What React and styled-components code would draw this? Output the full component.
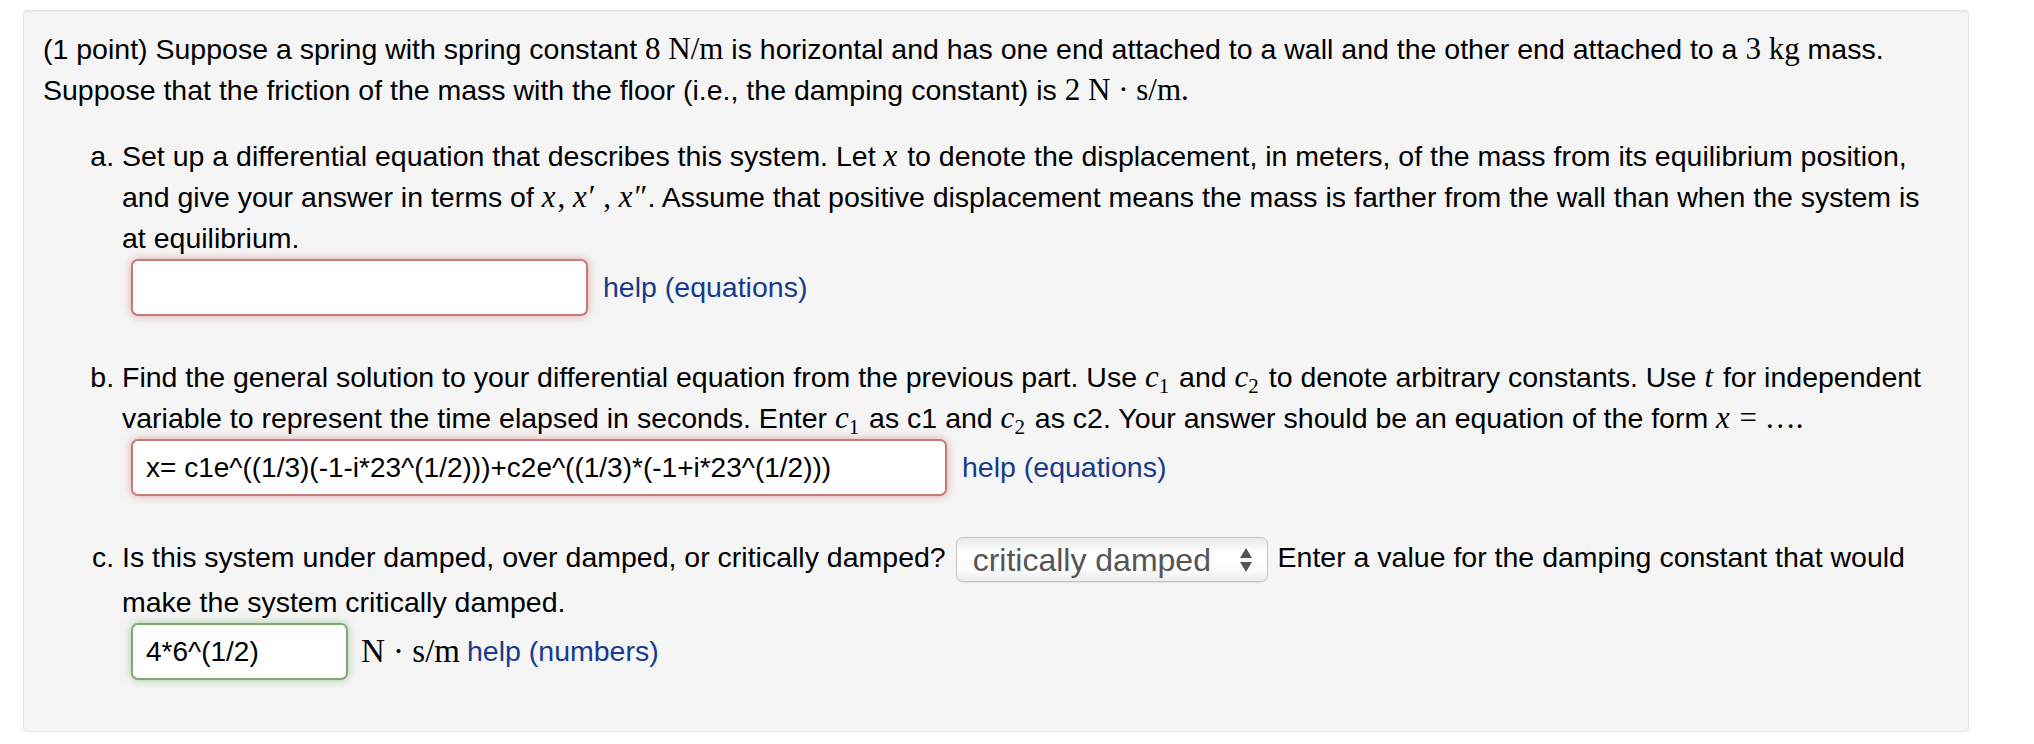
import React from 'react';
import styled, { createGlobalStyle } from 'styled-components';

const GlobalStyle = createGlobalStyle`
  body {
    margin: 0;
    background: #ffffff;
    font-family: "Liberation Sans", Arial, Helvetica, sans-serif;
  }
`;

const Page = styled.div`
  padding: 10px 0 14px 23px;
`;

const Well = styled.div`
  box-sizing: border-box;
  width: 1946px;
  padding: 18px 19px 51px;
  background: #f5f5f5;
  border: 1px solid #e3e3e3;
  border-radius: 4px;
  box-shadow: inset 0 1px 1px rgba(0, 0, 0, 0.05);
  font-size: 28.5px;
  line-height: 41px;
  color: #000;
`;

const Intro = styled.p`
  margin: 0 0 25px;
`;

const Parts = styled.ol`
  list-style: lower-alpha;
  margin: 0;
  padding-left: 79px;
`;

const Part = styled.li`
  margin-bottom: ${({ last }) => (last ? '0' : '41px')};
  padding-left: 0;
`;

// MathJax-like inline math
const M = styled.span`
  font-family: "Liberation Serif", "Times New Roman", serif;
  font-size: 31px;
  line-height: 1;
`;

const V = styled.i`
  font-family: "Liberation Serif", "Times New Roman", serif;
  font-size: 31px;
  line-height: 1;
  font-style: italic;
  padding-right: 2px;
`;

const Sub = styled.sub`
  font-style: normal;
  font-size: 21px;
  line-height: 1;
  vertical-align: -6px;
`;

const AnswerRow = styled.div`
  display: flex;
  align-items: center;
  gap: ${({ gap }) => gap || 15}px;
  margin: 0 0 0 9px;
`;

const AnswerBox = styled.div`
  box-sizing: border-box;
  width: ${({ w }) => w}px;
  height: 57px;
  padding: 0 13px;
  display: flex;
  align-items: center;
  background: #fff;
  border: 2px solid ${({ ok }) => (ok ? '#80a874' : '#c77b79')};
  border-radius: 7px;
  box-shadow: 0 0 10px ${({ ok }) => (ok ? 'rgba(90, 160, 80, 0.5)' : 'rgba(200, 90, 90, 0.5)')};
  font-size: 28px;
  color: #000;
  white-space: nowrap;
`;

const Help = styled.a`
  color: #173b8c;
  text-decoration: none;
  font-size: 28.5px;
`;

const Units = styled.span`
  font-family: "Liberation Serif", "Times New Roman", serif;
  font-size: 33px;
`;

const UnitsRow = styled.span`
  display: inline-flex;
  align-items: center;
  gap: 7px;
`;

const SelectBox = styled.span`
  box-sizing: border-box;
  display: inline-flex;
  align-items: center;
  justify-content: space-between;
  width: 312px;
  height: 45px;
  padding: 0 14px 0 16px;
  margin: 0 2px;
  vertical-align: middle;
  border: 1px solid #c4c4c4;
  border-radius: 7px;
  background: linear-gradient(#e9e9e9 0%, #ffffff 35%, #fbfbfb 75%, #ececec 100%);
  box-shadow: 0 1px 1px rgba(0, 0, 0, 0.08);
  color: #555;
  font-size: 32px;
  line-height: 1;
`;

const Arrows = () => (
  <svg width="14" height="26" viewBox="0 0 14 26">
    <path d="M7 1 L13 11 L1 11 Z" fill="#555" />
    <path d="M7 25 L13 15 L1 15 Z" fill="#555" />
  </svg>
);

export default function App() {
  return (
    <>
      <GlobalStyle />
      <Page>
        <Well>
          <Intro>
            (1 point) Suppose a spring with spring constant <M>8 N/m</M> is horizontal and has one end attached to a
            wall and the other end attached to a <M>3 kg</M> mass.
            <br />
            Suppose that the friction of the mass with the floor (i.e., the damping constant) is <M>2 N · s/m.</M>
          </Intro>
          <Parts>
            <Part>
              Set up a differential equation that describes this system. Let <V>x</V> to denote the displacement, in
              meters, of the mass from its equilibrium position,
              <br />
              and give your answer in terms of <V>x</V>
              <M>, </M>
              <V>x</V>
              <M>′ , </M>
              <V>x</V>
              <M>″</M>. Assume that positive displacement means the mass is farther from the wall than when the
              system is
              <br />
              at equilibrium.
              <AnswerRow>
                <AnswerBox w={457} />
                <Help href="#">help (equations)</Help>
              </AnswerRow>
            </Part>
            <Part>
              Find the general solution to your differential equation from the previous part. Use{' '}
              <V>c<Sub>1</Sub></V> and <V>c<Sub>2</Sub></V> to denote arbitrary constants. Use <V>t</V> for
              independent
              <br />
              variable to represent the time elapsed in seconds. Enter <V>c<Sub>1</Sub></V> as c1 and{' '}
              <V>c<Sub>2</Sub></V> as c2. Your answer should be an equation of the form <V>x</V>
              <M> = ….</M>
              <AnswerRow>
                <AnswerBox w={816}>x= c1e^((1/3)(-1-i*23^(1/2)))+c2e^((1/3)*(-1+i*23^(1/2)))</AnswerBox>
                <Help href="#">help (equations)</Help>
              </AnswerRow>
            </Part>
            <Part last>
              Is this system under damped, over damped, or critically damped?{' '}
              <SelectBox>
                critically damped
                <Arrows />
              </SelectBox>{' '}
              Enter a value for the damping constant that would
              <br />
              make the system critically damped.
              <AnswerRow gap={13}>
                <AnswerBox w={217} ok>4*6^(1/2)</AnswerBox>
                <UnitsRow>
                  <Units>N · s/m</Units>
                  <Help href="#">help (numbers)</Help>
                </UnitsRow>
              </AnswerRow>
            </Part>
          </Parts>
        </Well>
      </Page>
    </>
  );
}
